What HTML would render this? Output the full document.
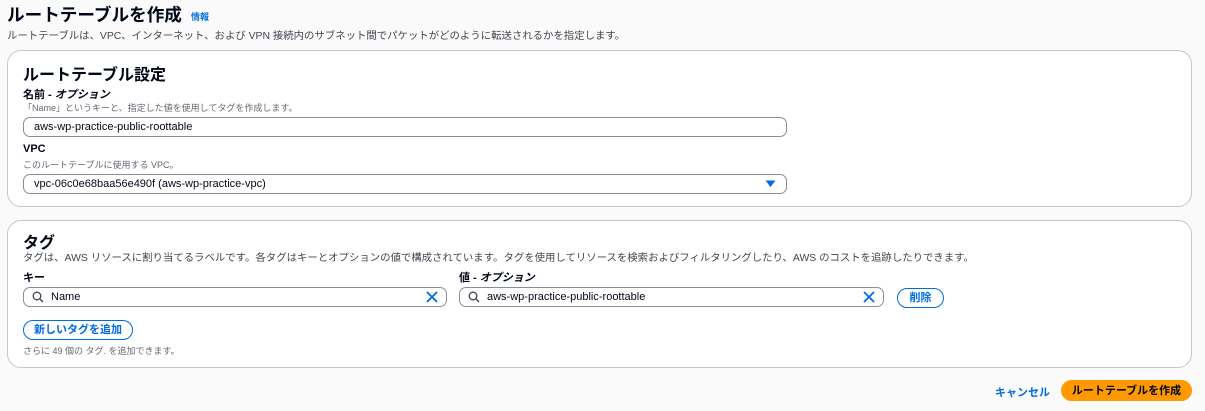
<!DOCTYPE html>
<html><head><meta charset="utf-8"><style>
*{box-sizing:border-box;margin:0;padding:0}
body{width:1205px;height:411px;background:#fafafa;font-family:"Liberation Sans","Noto Sans CJK JP",sans-serif;color:#000716;position:relative;overflow:hidden}
.a{position:absolute;white-space:nowrap}
.panel{position:absolute;left:7px;width:1185px;background:#fff;border:1px solid #c6c6cd;border-radius:14px}
.inp{position:absolute;height:20px;border:1px solid #8c8c94;border-radius:7px;background:#fff;font-size:11px;line-height:19px;padding-left:10px}
.lab{font-size:11px;font-weight:bold}
.desc{font-size:9px;color:#656871}
.btn{position:absolute;border:1.5px solid #006ce0;border-radius:12px;color:#006ce0;font-size:11px;font-weight:bold;text-align:center;line-height:18px;background:#fff}
</style></head><body>
<div class="a" style="left:7px;top:2px;font-size:17.6px;font-weight:bold">ルートテーブルを作成</div>
<div class="a" style="left:191px;top:10px;font-size:9px;font-weight:bold;color:#006ce0">情報</div>
<div class="a" style="left:7px;top:27px;font-size:10.4px;color:#424650">ルートテーブルは、VPC、インターネット、および VPN 接続内のサブネット間でパケットがどのように転送されるかを指定します。</div>

<div class="panel" style="top:50px;height:157px"></div>
<div class="a" style="left:23px;top:61px;font-size:16px;font-weight:bold">ルートテーブル設定</div>
<div class="a lab" style="left:23px;top:86px">名前 - <i>オプション</i></div>
<div class="a desc" style="left:23px;top:101px">「Name」というキーと、指定した値を使用してタグを作成します。</div>
<div class="inp" style="left:23px;top:117px;width:764px">aws-wp-practice-public-roottable</div>
<div class="a lab" style="left:23px;top:143px">VPC</div>
<div class="a desc" style="left:23px;top:158px">このルートテーブルに使用する VPC。</div>
<div class="inp" style="left:23px;top:174px;width:764px">vpc-06c0e68baa56e490f (aws-wp-practice-vpc)</div>
<svg class="a" style="left:765px;top:180px" width="11" height="8"><path d="M0.5 0.5H10.5L5.5 7Z" fill="#006ce0"/></svg>

<div class="panel" style="top:220px;height:148px"></div>
<div class="a" style="left:23px;top:229px;font-size:16px;font-weight:bold">タグ</div>
<div class="a" style="left:23px;top:249px;font-size:10.4px;color:#424650">タグは、AWS リソースに割り当てるラベルです。各タグはキーとオプションの値で構成されています。タグを使用してリソースを検索およびフィルタリングしたり、AWS のコストを追跡したりできます。</div>
<div class="a lab" style="left:23px;top:269px">キー</div>
<div class="a lab" style="left:459px;top:269px">値 - <i>オプション</i></div>
<div class="inp" style="left:23px;top:287px;width:424px;padding-left:27px">Name</div>
<svg class="a" style="left:32px;top:291px" width="12" height="12"><circle cx="5" cy="5" r="3.8" stroke="#424650" stroke-width="1.3" fill="none"/><path d="M8 8L11 11" stroke="#424650" stroke-width="1.4"/></svg>
<svg class="a" style="left:426px;top:291px" width="12" height="12"><path d="M1 1L11 11M11 1L1 11" stroke="#006ce0" stroke-width="1.8"/></svg>
<div class="inp" style="left:459px;top:287px;width:425px;padding-left:27px">aws-wp-practice-public-roottable</div>
<svg class="a" style="left:468px;top:291px" width="12" height="12"><circle cx="5" cy="5" r="3.8" stroke="#424650" stroke-width="1.3" fill="none"/><path d="M8 8L11 11" stroke="#424650" stroke-width="1.4"/></svg>
<svg class="a" style="left:863px;top:291px" width="12" height="12"><path d="M1 1L11 11M11 1L1 11" stroke="#006ce0" stroke-width="1.8"/></svg>
<div class="btn" style="left:897px;top:288px;width:47px;height:20px">削除</div>
<div class="btn" style="left:23px;top:320px;width:110px;height:20px">新しいタグを追加</div>
<div class="a desc" style="left:23px;top:344px">さらに 49 個の タグ. を追加できます。</div>

<div class="a" style="left:995px;top:384px;font-size:11px;font-weight:bold;color:#006ce0">キャンセル</div>
<div class="a" style="left:1061px;top:380px;width:131px;height:21px;background:#ff9900;border-radius:11px;font-size:11px;font-weight:bold;text-align:center;line-height:22px">ルートテーブルを作成</div>
</body></html>
